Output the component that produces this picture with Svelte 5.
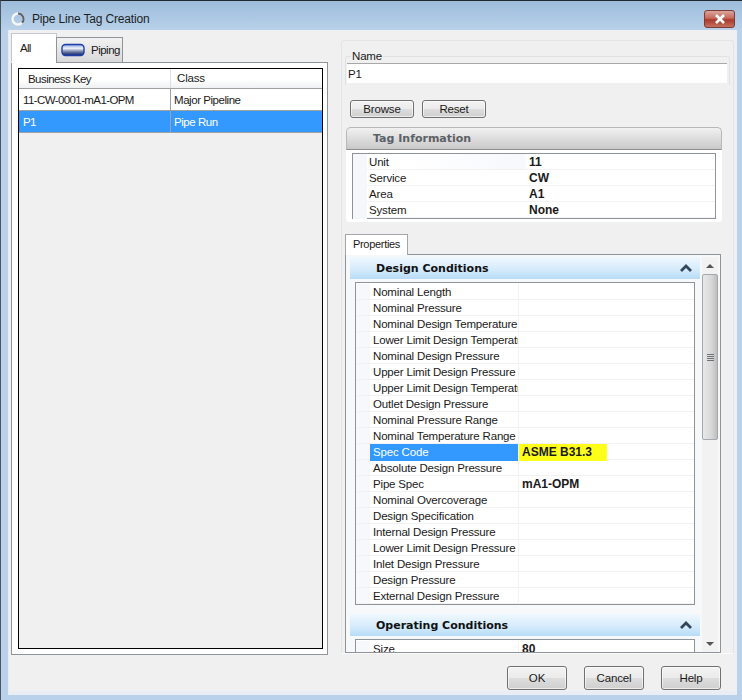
<script>
  const records = [
    { key: "11-CW-0001-mA1-OPM", cls: "Major Pipeline" },
    { key: "P1", cls: "Pipe Run", selected: true },
  ];

  const tagInfo = [
    { name: "Unit", value: "11" },
    { name: "Service", value: "CW" },
    { name: "Area", value: "A1" },
    { name: "System", value: "None" },
  ];

  const designConditions = [
    { name: "Nominal Length" },
    { name: "Nominal Pressure" },
    { name: "Nominal Design Temperature" },
    { name: "Lower Limit Design Temperature" },
    { name: "Nominal Design Pressure" },
    { name: "Upper Limit Design Pressure" },
    { name: "Upper Limit Design Temperature" },
    { name: "Outlet Design Pressure" },
    { name: "Nominal Pressure Range" },
    { name: "Nominal Temperature Range" },
    { name: "Spec Code", value: "ASME B31.3", active: true },
    { name: "Absolute Design Pressure" },
    { name: "Pipe Spec", value: "mA1-OPM" },
    { name: "Nominal Overcoverage" },
    { name: "Design Specification" },
    { name: "Internal Design Pressure" },
    { name: "Lower Limit Design Pressure" },
    { name: "Inlet Design Pressure" },
    { name: "Design Pressure" },
    { name: "External Design Pressure" },
  ];

  const operatingConditions = [{ name: "Size", value: "80" }];

  const sections = [
    { title: "Design Conditions", rows: designConditions },
    { title: "Operating Conditions", rows: operatingConditions },
  ];
</script>

<div class="window">
  <header class="titlebar">
    <svg class="app-icon" width="16" height="16" viewBox="0 0 16 16">
      <circle cx="8" cy="8" r="5.5" fill="none" stroke="#f4f6f8" stroke-width="2.4" />
      <path d="M8 2.5a5.5 5.5 0 0 1 4 9.3" fill="none" stroke="#5c6268" stroke-width="2" />
    </svg>
    <span class="title">Pipe Line Tag Creation</span>
    <button class="close" aria-label="Close">
      <svg width="12" height="10" viewBox="0 0 12 10">
        <path d="M2 1l8 8M10 1l-8 8" stroke="#fff" stroke-width="2.6" />
      </svg>
    </button>
  </header>

  <div class="client">
    <div class="columns">
      <section class="left">
        <div class="tabs">
          <div class="tab active">All</div>
          <div class="tab">
            <svg width="24" height="14" viewBox="0 0 24 14">
              <defs>
                <linearGradient id="pipe" x1="0" y1="0" x2="0" y2="1">
                  <stop offset="0" stop-color="#8aa3dc" />
                  <stop offset="0.35" stop-color="#eef2fb" />
                  <stop offset="0.7" stop-color="#5f6f9c" />
                  <stop offset="1" stop-color="#14236a" />
                </linearGradient>
              </defs>
              <rect x="1" y="1.5" width="22" height="11" rx="3.5" fill="url(#pipe)" stroke="#1f3fa8" stroke-width="1.4" />
            </svg>
            Piping
          </div>
        </div>
        <div class="tab-panel">
          <div class="grid">
            <div class="grid-head">
              <div class="key">Business Key</div>
              <div class="cls">Class</div>
            </div>
            {#each records as r}
              <div class="grid-row" class:selected={r.selected}>
                <div class="key">{r.key}</div>
                <div class="cls">{r.cls}</div>
              </div>
            {/each}
          </div>
        </div>
      </section>

      <section class="right">
        <fieldset class="name">
          <legend>Name</legend>
          <input type="text" value="P1" />
        </fieldset>

        <div class="actions">
          <button class="btn small">Browse</button>
          <button class="btn small">Reset</button>
        </div>

        <div class="tag-head">Tag Information</div>
        <div class="tag-body">
          <div class="tag-table">
            {#each tagInfo as row, i}
              <div class="tag-row" class:first={i === 0}>
                <span class="tag-name">{row.name}</span>
                <span class="tag-value">{row.value}</span>
              </div>
            {/each}
          </div>
        </div>

        <div class="prop-tab">Properties</div>
        <div class="prop-panel">
          <div class="prop-scroll">
            {#each sections as s}
              <div class="section-head">
                <span>{s.title}</span>
                <svg width="12" height="8" viewBox="0 0 12 8">
                  <path d="M1 7l5-5 5 5" fill="none" stroke="#33475a" stroke-width="2.8" />
                </svg>
              </div>
              <div class="prop-table">
                {#each s.rows as row}
                  <div class="prop-row">
                    <div class="prop-name" class:active={row.active}>{row.name}</div>
                    <div class="prop-value">
                      {#if row.value}
                        <span class:hl={row.active}>{row.value}</span>
                      {/if}
                    </div>
                  </div>
                {/each}
              </div>
            {/each}
          </div>
          <div class="scrollbar">
            <div class="arrow up"></div>
            <div class="thumb">
              <span></span><span></span><span></span><span></span>
            </div>
            <div class="track"></div>
            <div class="arrow down"></div>
          </div>
        </div>
      </section>
    </div>

    <footer class="footer">
      <button class="btn">OK</button>
      <button class="btn">Cancel</button>
      <button class="btn">Help</button>
    </footer>
  </div>
</div>

<style>
  :global(body) {
    margin: 0;
    background: #b9d1ea;
  }

  .window {
    width: 742px;
    height: 700px;
    box-sizing: border-box;
    display: flex;
    flex-direction: column;
    background: #b9d1ea;
    border-top: 1px solid #23282e;
    border-left: 1px solid #4a5560;
    font-family: "Liberation Sans", Arial, sans-serif;
    font-size: 11.5px;
    letter-spacing: -0.17px;
    color: #1a1a1a;
    overflow: hidden;
  }

  .titlebar {
    height: 29px;
    flex: none;
    box-sizing: border-box;
    display: flex;
    align-items: center;
    padding: 7px 7px 0 9px;
    background: linear-gradient(#9dbcdb, #b9d1ea);
  }

  .app-icon {
    margin-right: 6px;
  }

  .title {
    font-size: 12px;
    color: #1a1f26;
  }

  .close {
    margin-left: auto;
    margin-top: -1px;
    width: 31px;
    height: 18px;
    padding: 0;
    display: flex;
    align-items: center;
    justify-content: center;
    border: 1px solid #7c3b34;
    border-radius: 3px;
    background: linear-gradient(#d9a59b 0, #c7695b 45%, #a83a2c 55%, #c4705f 100%);
  }

  .client {
    flex: 1;
    min-height: 0;
    margin: 0 5px 5px 7px;
    display: flex;
    flex-direction: column;
    background: #f0f0f0;
    border-left: 1px solid #e6ebf2;
    border-bottom: 4px solid #e9edf4;
  }

  .columns {
    flex: 1;
    min-height: 0;
    display: flex;
    padding: 3px 3px 0 2px;
    gap: 13px;
  }

  .left {
    width: 317px;
    flex: none;
    display: flex;
    flex-direction: column;
    height: 622px;
  }

  .tabs {
    display: flex;
    align-items: flex-end;
    height: 30px;
    flex: none;
    position: relative;
    z-index: 1;
    margin-bottom: -1px;
  }

  .tab {
    height: 26px;
    box-sizing: border-box;
    display: flex;
    align-items: center;
    gap: 6px;
    padding: 0 0 0 4px;
    width: 67px;
    border: 1px solid #8e9499;
    background: linear-gradient(#f2f2f2, #d9d9d9);
    white-space: nowrap;
    letter-spacing: -0.5px;
  }

  .tab svg {
    flex: none;
  }

  .tab.active {
    height: 30px;
    width: 46px;
    align-items: flex-start;
    padding: 8px 0 0 8px;
    margin-right: -1px;
    background: #fff;
    border-color: #c4c8cc;
    border-bottom-color: #fff;
    letter-spacing: -0.7px;
  }

  .tab-panel {
    flex: 1;
    min-height: 0;
    box-sizing: border-box;
    padding: 5px 4px 5px 6px;
    border: 1px solid #8e9499;
    background: #fff;
  }

  .grid {
    height: 100%;
    box-sizing: border-box;
    border: 1px solid #000;
    background: #f0f0f0;
  }

  .grid-head,
  .grid-row {
    display: grid;
    grid-template-columns: 151px 1fr;
    box-sizing: border-box;
    align-items: center;
  }

  .grid-head {
    height: 20px;
    background: linear-gradient(#fff 0, #fff 55%, #f0f1f2 100%);
    border-bottom: 1px solid #a0a0a0;
  }

  .grid-head .key {
    padding-left: 9px;
    letter-spacing: -0.55px;
  }

  .grid-head .cls {
    padding-left: 6px;
    height: 100%;
    line-height: 19px;
    border-left: 1px solid #dcdfe3;
  }

  .grid-row {
    height: 22px;
    background: #fff;
    border-bottom: 1px solid #a0a0a0;
    line-height: 22px;
  }

  .grid-row .key {
    padding-left: 4px;
    letter-spacing: -0.6px;
  }

  .grid-row .cls {
    padding-left: 3px;
    height: 100%;
    letter-spacing: -0.45px;
    border-left: 1px solid #a0a0a0;
  }

  .grid-row.selected {
    background: #3399ff;
    color: #fff;
  }

  .right {
    flex: 1;
    min-width: 0;
    margin-top: 7px;
    height: 614px;
    box-sizing: border-box;
    display: flex;
    flex-direction: column;
    padding: 0 3px 0 3px;
    border: 1px solid #e2e5e8;
    border-bottom: 1px solid #fafafa;
    border-radius: 3px 3px 0 0;
    overflow: hidden;
  }

  .name {
    margin: 8px 0 0 0;
    padding: 0 2px 0 1px;
    border: 1px solid #dfe1e3;
    border-bottom: none;
    border-radius: 3px 3px 0 0;
    height: 36px;
    box-sizing: border-box;
    flex: none;
  }

  .name legend {
    padding: 0 1px;
    margin-left: 4px;
    line-height: 14px;
  }

  .name input {
    display: block;
    width: 100%;
    height: 20px;
    box-sizing: border-box;
    border: none;
    border-top: 1px solid #a6a8aa;
    background: #fff;
    padding: 0 1px;
    margin: 0;
    font: 11.5px "Liberation Sans", Arial, sans-serif;
    letter-spacing: -0.17px;
    color: #1a1a1a;
  }

  .actions {
    display: flex;
    gap: 8px;
    margin: 15px 0 0 5px;
    flex: none;
  }

  .btn {
    width: 60px;
    height: 24px;
    padding: 0;
    border: 1px solid #707070;
    border-radius: 3px;
    background: linear-gradient(#f3f3f3 0, #ebebeb 48%, #dddddd 52%, #cfcfcf 100%);
    box-shadow: inset 0 0 0 1px rgba(255, 255, 255, 0.6);
    font: 11.5px "Liberation Sans", Arial, sans-serif;
    letter-spacing: -0.17px;
    color: #1a1a1a;
  }

  .btn.small {
    width: 64px;
    height: 18px;
    line-height: 14px;
  }

  .tag-head {
    flex: none;
    margin: 9px 8px 0 1px;
    height: 23px;
    box-sizing: border-box;
    padding: 4px 0 0 26px;
    border: 1px solid #b6b8ba;
    border-bottom: 1px solid #8e9092;
    border-radius: 5px 5px 0 0;
    background: linear-gradient(#f1f1f1, #c9c9c9);
    font: bold 11px "DejaVu Sans", Verdana, sans-serif;
    letter-spacing: 0;
    color: #5c6166;
  }

  .tag-body {
    flex: none;
    margin: 0 8px 0 1px;
    padding: 3px 6px 3px 6px;
    background: #fff;
    border-radius: 0 0 4px 4px;
  }

  .tag-table {
    border: 1px solid #8e9499;
    height: 66px;
    box-sizing: border-box;
  }

  .tag-row {
    height: 16px;
    display: grid;
    grid-template-columns: 173px 1fr;
    box-sizing: border-box;
    border-bottom: 1px solid #f2f2f2;
    line-height: 17px;
  }

  .tag-row.first {
    background: linear-gradient(90deg, #fff 60px, #f6f8fc 170px, #fff 176px);
  }

  .tag-name {
    border-left: 14px solid #f5f7fb;
    padding-left: 2px;
  }

  .tag-value {
    font-weight: bold;
    padding-left: 3px;
    font-size: 12px;
    letter-spacing: 0;
  }

  .prop-tab {
    flex: none;
    width: 63px;
    height: 21px;
    margin: 12px 0 -1px 0;
    box-sizing: border-box;
    padding-top: 3px;
    text-align: center;
    font-size: 11px;
    letter-spacing: -0.3px;
    background: #fff;
    border: 1px solid #a2a6aa;
    border-bottom: none;
    position: relative;
    z-index: 1;
  }

  .prop-panel {
    flex: 1;
    min-height: 0;
    margin-right: 9px;
    display: flex;
    box-sizing: border-box;
    padding: 2px 2px 0 4px;
    border: 1px solid #8e9499;
    overflow: hidden;
    background: #f7f8fa;
  }

  .prop-scroll {
    width: 350px;
    flex: none;
    overflow: hidden;
  }

  .section-head {
    height: 22px;
    box-sizing: border-box;
    display: flex;
    align-items: center;
    justify-content: space-between;
    padding: 0 8px 0 26px;
    background: linear-gradient(#f0f8fe, #d3eafb 60%, #b7dcf7);
    font: bold 11px "DejaVu Sans", Verdana, sans-serif;
    letter-spacing: 0;
    color: #111;
  }

  .prop-table {
    margin: 3px 5px 9px 5px;
    padding: 1px 0 0;
    border: 1px solid #8e9499;
    background: #fff;
  }

  .prop-row {
    height: 16px;
    display: grid;
    grid-template-columns: 163px 1fr;
    box-sizing: border-box;
    border-bottom: 1px solid #f2f2f2;
    line-height: 17px;
    background: linear-gradient(90deg, #f6f8fc 14px, #fff 14px);
  }

  .prop-name {
    margin-left: 14px;
    padding-left: 3px;
    white-space: nowrap;
    overflow: hidden;
    border-right: 1px solid #f2f2f2;
  }

  .prop-name.active {
    background: #3399ff;
    color: #fff;
  }

  .prop-value {
    font-weight: bold;
    font-size: 12px;
    letter-spacing: 0;
    padding-left: 3px;
  }

  .prop-value .hl {
    display: block;
    width: 88px;
    margin-left: -3px;
    padding-left: 3px;
    box-sizing: border-box;
    background: #ffff1a;
  }

  .scrollbar {
    flex: none;
    width: 16px;
    margin-left: 2px;
    display: flex;
    flex-direction: column;
    background: #f2f2f2;
  }

  .arrow {
    height: 17px;
    flex: none;
    display: flex;
    justify-content: center;
    align-items: center;
  }

  .arrow::after {
    content: "";
    border-left: 4px solid transparent;
    border-right: 4px solid transparent;
  }

  .arrow.up::after {
    border-bottom: 4px solid #555;
  }

  .arrow.down::after {
    border-top: 4px solid #555;
  }

  .thumb {
    height: 166px;
    flex: none;
    box-sizing: border-box;
    border: 1px solid #a4a8ac;
    border-radius: 2px;
    background: linear-gradient(90deg, #e8e8e8, #d8d8d8 60%, #bdbdbd);
    display: flex;
    flex-direction: column;
    justify-content: center;
    gap: 1px;
    align-items: center;
  }

  .thumb span {
    width: 7px;
    height: 1px;
    background: #6e7276;
  }

  .track {
    flex: 1;
  }

  .footer {
    flex: none;
    height: 40px;
    box-sizing: border-box;
    display: flex;
    justify-content: flex-end;
    gap: 17px;
    padding: 15px 16px 0 0;
  }
</style>
